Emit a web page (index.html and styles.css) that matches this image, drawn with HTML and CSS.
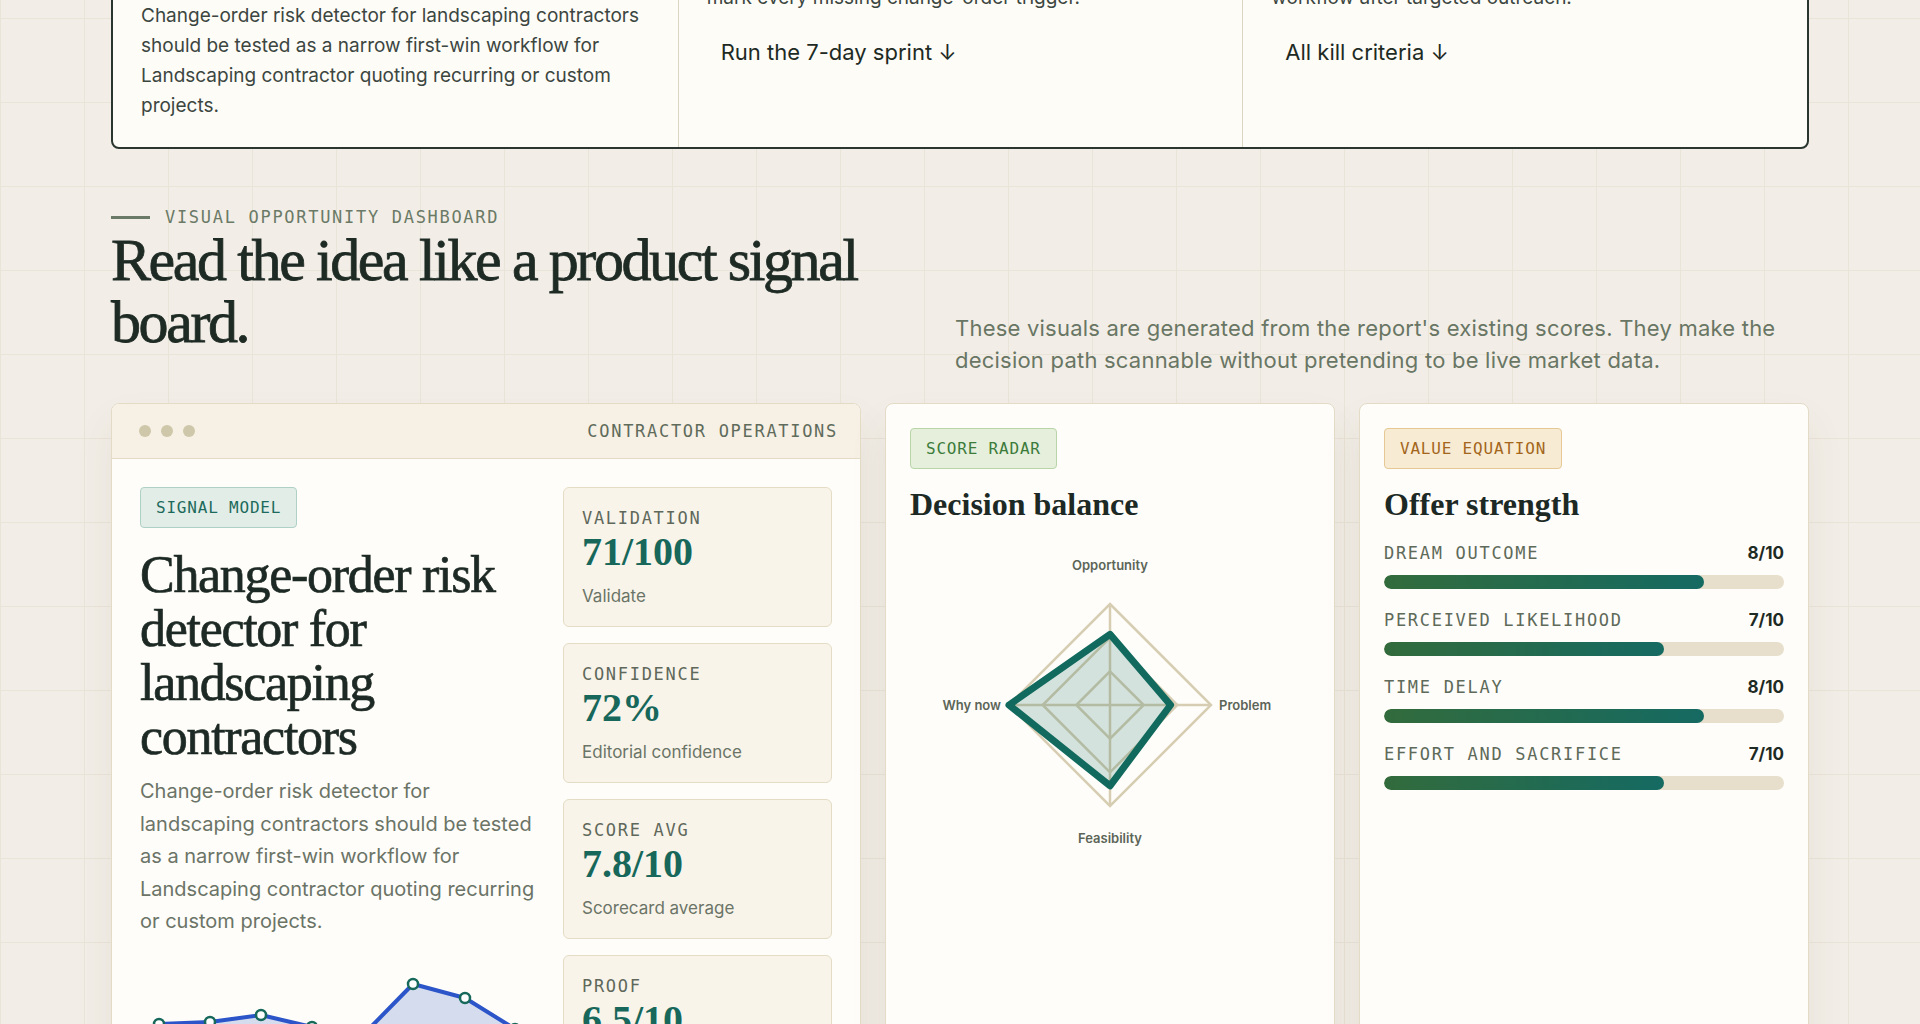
FILE: index.html
```html
<!DOCTYPE html>
<html lang="en">

<head>
    <meta charset="UTF-8">
    <title>Change-order risk detector</title>

    <link rel="stylesheet" href="styles.css">
</head>

<body>

    <main class="page">

        <section class="summary">
            <div class="summary-col">
                <span class="summary-label">THE VERDICT</span>
                <h3 class="summary-title">Validate before you build the full tool</h3>
                <p class="summary-text">Change-order risk detector for landscaping contractors should be tested as a narrow first-win workflow for Landscaping contractor quoting recurring or custom projects.</p>
            </div>
            <div class="summary-col">
                <span class="summary-label">FIRST TEST</span>
                <h3 class="summary-title">Audit ten old quotes</h3>
                <p class="summary-text">Pull ten recent landscaping quotes and<br>mark every missing change-order trigger.</p>
                <a class="summary-link" href="#sprint">Run the 7-day sprint ↓</a>
            </div>
            <div class="summary-col">
                <span class="summary-label">KILL SIGNAL</span>
                <h3 class="summary-title">Stop if nobody bites</h3>
                <p class="summary-text">Stop if fewer than three contractors ask to pilot the<br>workflow after targeted outreach.</p>
                <a class="summary-link" href="#kill">All kill criteria ↓</a>
            </div>
        </section>

        <section class="dashboard">
            <div class="dash-head">
                <div>
                    <p class="eyebrow">VISUAL OPPORTUNITY DASHBOARD</p>
                    <h2 class="dash-title">Read the idea like a product signal board.</h2>
                </div>
                <p class="dash-note">These visuals are generated from the report's existing scores. They make the decision path scannable without pretending to be live market data.</p>
            </div>

            <div class="boards">

                <article class="panel window">
                    <header class="window-bar">
                        <span class="dots"><i></i><i></i><i></i></span>
                        <span class="window-title">CONTRACTOR OPERATIONS</span>
                    </header>

                    <div class="window-body">
                        <div class="signal">
                            <span class="tag tag-teal">SIGNAL MODEL</span>
                            <h3 class="signal-title">Change-order risk detector for landscaping contractors</h3>
                            <p class="signal-text">Change-order risk detector for landscaping contractors should be tested as a narrow first-win workflow for Landscaping contractor quoting recurring or custom projects.</p>

                            <svg class="trend" viewBox="0 0 395 150">
                                <polygon class="trend-area" points="19,61 70,59 121,52 172,64 223,72 273,21 325,35 375,66 375,150 19,150"></polygon>
                                <polyline class="trend-line" points="19,61 70,59 121,52 172,64 223,72 273,21 325,35 375,66"></polyline>
                                <circle cx="19" cy="61" r="5"></circle>
                                <circle cx="70" cy="59" r="5"></circle>
                                <circle cx="121" cy="52" r="5"></circle>
                                <circle cx="172" cy="64" r="5"></circle>
                                <circle cx="223" cy="72" r="5"></circle>
                                <circle cx="273" cy="21" r="5"></circle>
                                <circle cx="325" cy="35" r="5"></circle>
                                <circle cx="375" cy="66" r="5"></circle>
                            </svg>
                        </div>

                        <div class="stats">
                            <div class="stat">
                                <span class="stat-label">VALIDATION</span>
                                <span class="stat-value">71/100</span>
                                <span class="stat-note">Validate</span>
                            </div>
                            <div class="stat">
                                <span class="stat-label">CONFIDENCE</span>
                                <span class="stat-value">72%</span>
                                <span class="stat-note">Editorial confidence</span>
                            </div>
                            <div class="stat">
                                <span class="stat-label">SCORE AVG</span>
                                <span class="stat-value">7.8/10</span>
                                <span class="stat-note">Scorecard average</span>
                            </div>
                            <div class="stat">
                                <span class="stat-label">PROOF</span>
                                <span class="stat-value">6.5/10</span>
                                <span class="stat-note">Evidence strength</span>
                            </div>
                        </div>
                    </div>
                </article>

                <article class="panel card">
                    <span class="tag tag-green">SCORE RADAR</span>
                    <h3 class="panel-title">Decision balance</h3>

                    <svg class="radar" viewBox="0 0 400 320">
                        <polygon class="radar-grid" points="200,61 301,162 200,263 99,162"></polygon>
                        <polygon class="radar-grid" points="200,94.7 267.3,162 200,229.3 132.7,162"></polygon>
                        <polygon class="radar-grid" points="200,128.3 233.7,162 200,195.7 166.3,162"></polygon>
                        <line class="radar-grid" x1="200" y1="61" x2="200" y2="263"></line>
                        <line class="radar-grid" x1="99" y1="162" x2="301" y2="162"></line>

                        <polygon class="radar-shape" points="200,91.3 260.6,162 200,242.8 99,162"></polygon>

                        <text x="200" y="27" text-anchor="middle">Opportunity</text>
                        <text x="309" y="167">Problem</text>
                        <text x="91" y="167" text-anchor="end">Why now</text>
                        <text x="200" y="300" text-anchor="middle">Feasibility</text>
                    </svg>
                </article>

                <article class="panel card">
                    <span class="tag tag-amber">VALUE EQUATION</span>
                    <h3 class="panel-title">Offer strength</h3>

                    <div class="meters">
                        <div class="meter">
                            <div class="meter-head"><span class="meter-label">DREAM OUTCOME</span><b class="meter-value">8/10</b></div>
                            <div class="meter-track"><div class="meter-fill" style="width: 80%"></div></div>
                        </div>
                        <div class="meter">
                            <div class="meter-head"><span class="meter-label">PERCEIVED LIKELIHOOD</span><b class="meter-value">7/10</b></div>
                            <div class="meter-track"><div class="meter-fill" style="width: 70%"></div></div>
                        </div>
                        <div class="meter">
                            <div class="meter-head"><span class="meter-label">TIME DELAY</span><b class="meter-value">8/10</b></div>
                            <div class="meter-track"><div class="meter-fill" style="width: 80%"></div></div>
                        </div>
                        <div class="meter">
                            <div class="meter-head"><span class="meter-label">EFFORT AND SACRIFICE</span><b class="meter-value">7/10</b></div>
                            <div class="meter-track"><div class="meter-fill" style="width: 70%"></div></div>
                        </div>
                    </div>
                </article>

            </div>
        </section>

    </main>

</body>

</html>
```

FILE: styles.css
```css
body {
    margin: 0;
    background-color: #f2eee7;
    background-image:
        linear-gradient(to right, #e9e4d8 1px, transparent 1px),
        linear-gradient(to bottom, #e9e4d8 1px, transparent 1px);
    background-size: 84px 84px;
    background-position: 0 18px;
    font-family: Inter, "Noto Sans", sans-serif;
    color: #1e2a24;
}

/* page is shown scrolled down: the summary card starts above the fold */
.page {
    max-width: 1698px;
    margin: -173px auto 0;
}

/* summary card */

.summary {
    display: grid;
    grid-template-columns: repeat(3, 1fr);
    background: #fdfcf7;
    border: 2px solid #2b3630;
    border-radius: 8px;
}

.summary-col {
    padding: 28px 28px 26px;
}

.summary-col + .summary-col {
    border-left: 1px solid #ddd5c3;
}

.summary-label {
    display: block;
    font: 14px/20px "DejaVu Sans Mono", monospace;
    letter-spacing: .15em;
    color: #6b7a66;
}

.summary-title {
    margin: 14px 0 0;
    font: 40px/48px "Liberation Serif", serif;
    font-weight: normal;
    letter-spacing: -0.02em;
}

.summary-text {
    margin: 14px 0 0;
    font-size: 19px;
    line-height: 30px;
    color: #3c4641;
}

.summary-link {
    display: inline-block;
    margin-top: 24px;
    padding: 0 14px;
    font-size: 22px;
    line-height: 30px;
    color: #1e2a24;
    text-decoration: none;
}

/* dashboard heading */

.dashboard {
    margin-top: 58px;
}

.dash-head {
    display: flex;
    justify-content: space-between;
    align-items: flex-end;
}

.eyebrow {
    display: flex;
    align-items: center;
    gap: 15px;
    margin: 0 0 2px;
    font: 17px/20px "DejaVu Sans Mono", monospace;
    letter-spacing: .1em;
    color: #6b7a66;
}

.eyebrow::before {
    content: "";
    width: 39px;
    height: 3px;
    background: #6b7a66;
}

.dash-title {
    max-width: 800px;
    margin: 0 0 23px;
    font: 60px/62px "Liberation Serif", serif;
    font-weight: normal;
    letter-spacing: -0.04em;
    color: #1e2a24;
    -webkit-text-stroke: 0.8px #1e2a24;
}

.dash-note {
    max-width: 854px;
    margin: 0;
    font-size: 22px;
    line-height: 32px;
    letter-spacing: .01em;
    color: #697664;
}

/* boards */

.boards {
    display: grid;
    grid-template-columns: 5fr 3fr 3fr;
    gap: 24px;
    margin-top: 27px;
}

.panel {
    min-height: 760px;
    background: #fefdf9;
    border: 1px solid #e4dbc7;
    border-radius: 8px;
    box-shadow: 0 20px 40px rgba(90, 75, 40, .07);
}

.card {
    display: flex;
    flex-direction: column;
    align-items: flex-start;
    padding: 24px;
}

.window {
    overflow: hidden;
}

.window-bar {
    display: flex;
    justify-content: space-between;
    align-items: center;
    height: 54px;
    padding: 0 22px 0 27px;
    background: #f6f0e5;
    border-bottom: 1px solid #e4dbc7;
}

.dots {
    display: flex;
    gap: 10px;
}

.dots i {
    width: 12px;
    height: 12px;
    border-radius: 50%;
    background: #cfc7a9;
}

.window-title {
    font: 17px/20px "DejaVu Sans Mono", monospace;
    letter-spacing: .1em;
    color: #5f6b5b;
}

.window-body {
    display: grid;
    grid-template-columns: 1fr 269px;
    gap: 28px;
    padding: 28px;
}

.signal {
    display: flex;
    flex-direction: column;
    align-items: flex-start;
}

.tag {
    display: inline-block;
    padding: 10px 15px;
    border: 1px solid;
    border-radius: 4px;
    font: 16px/19px "DejaVu Sans Mono", monospace;
    letter-spacing: .05em;
}

.tag-teal {
    background: #e2ede8;
    border-color: #afd0c6;
    color: #1d6a5c;
}

.tag-green {
    background: #e5efdc;
    border-color: #b9d5a8;
    color: #3d7b3b;
}

.tag-amber {
    background: #f8ebd3;
    border-color: #e5c894;
    color: #a3661c;
}

.signal-title {
    margin: 20px 0 0;
    font: 52px/54px "Liberation Serif", serif;
    font-weight: normal;
    letter-spacing: -0.025em;
    color: #1d2924;
    -webkit-text-stroke: 0.7px #1d2924;
}

.signal-text {
    margin: 11px 0 0;
    font-size: 20px;
    line-height: 32.5px;
    color: #6b7467;
}

.trend {
    display: block;
    width: 395px;
    height: 150px;
    margin-top: 25px;
}

.trend-area {
    fill: #d4dcee;
}

.trend-line {
    fill: none;
    stroke: #2b55c8;
    stroke-width: 4;
    stroke-linejoin: round;
}

.trend circle {
    fill: #fff;
    stroke: #17695b;
    stroke-width: 2.5;
}

.stats {
    display: flex;
    flex-direction: column;
    gap: 16px;
}

.stat {
    padding: 20px 18px 18px;
    background: #f8f4ea;
    border: 1px solid #e5dcc5;
    border-radius: 6px;
}

.stat-label {
    display: block;
    font: 17px/20px "DejaVu Sans Mono", monospace;
    letter-spacing: .1em;
    color: #5f685b;
}

.stat-value {
    display: block;
    margin-top: 2px;
    font: bold 40px/44px "Liberation Serif", serif;
    color: #17675b;
}

.stat-note {
    display: block;
    margin-top: 10px;
    font-size: 17px;
    line-height: 24px;
    color: #6b7467;
}

.panel-title {
    margin: 16px 0 0;
    font: bold 32px/38px "Liberation Serif", serif;
    color: #1d2924;
}

/* radar */

.radar {
    display: block;
    align-self: stretch;
    height: 320px;
    margin-top: 20px;
}

.radar-grid {
    fill: none;
    stroke: #d7cdb2;
    stroke-width: 2.5;
}

.radar-shape {
    fill: rgba(22, 107, 94, .18);
    stroke: #116a5d;
    stroke-width: 7;
    stroke-linejoin: round;
}

.radar text {
    font: 600 13px Inter, sans-serif;
    fill: #5c6558;
}

/* value equation meters */

.meters {
    align-self: stretch;
    display: flex;
    flex-direction: column;
    gap: 21px;
    margin-top: 20px;
}

.meter-head {
    display: flex;
    justify-content: space-between;
    align-items: baseline;
}

.meter-label {
    font: 17px/20px "DejaVu Sans Mono", monospace;
    letter-spacing: .1em;
    color: #5e6a5a;
}

.meter-value {
    font-size: 17px;
    font-weight: 700;
    color: #1e2a24;
}

.meter-track {
    height: 14px;
    margin-top: 12px;
    border-radius: 7px;
    background: #e7dfcb;
    overflow: hidden;
}

.meter-fill {
    height: 100%;
    border-radius: 7px;
    background: linear-gradient(90deg, #326b3c, #156a62);
}
```
